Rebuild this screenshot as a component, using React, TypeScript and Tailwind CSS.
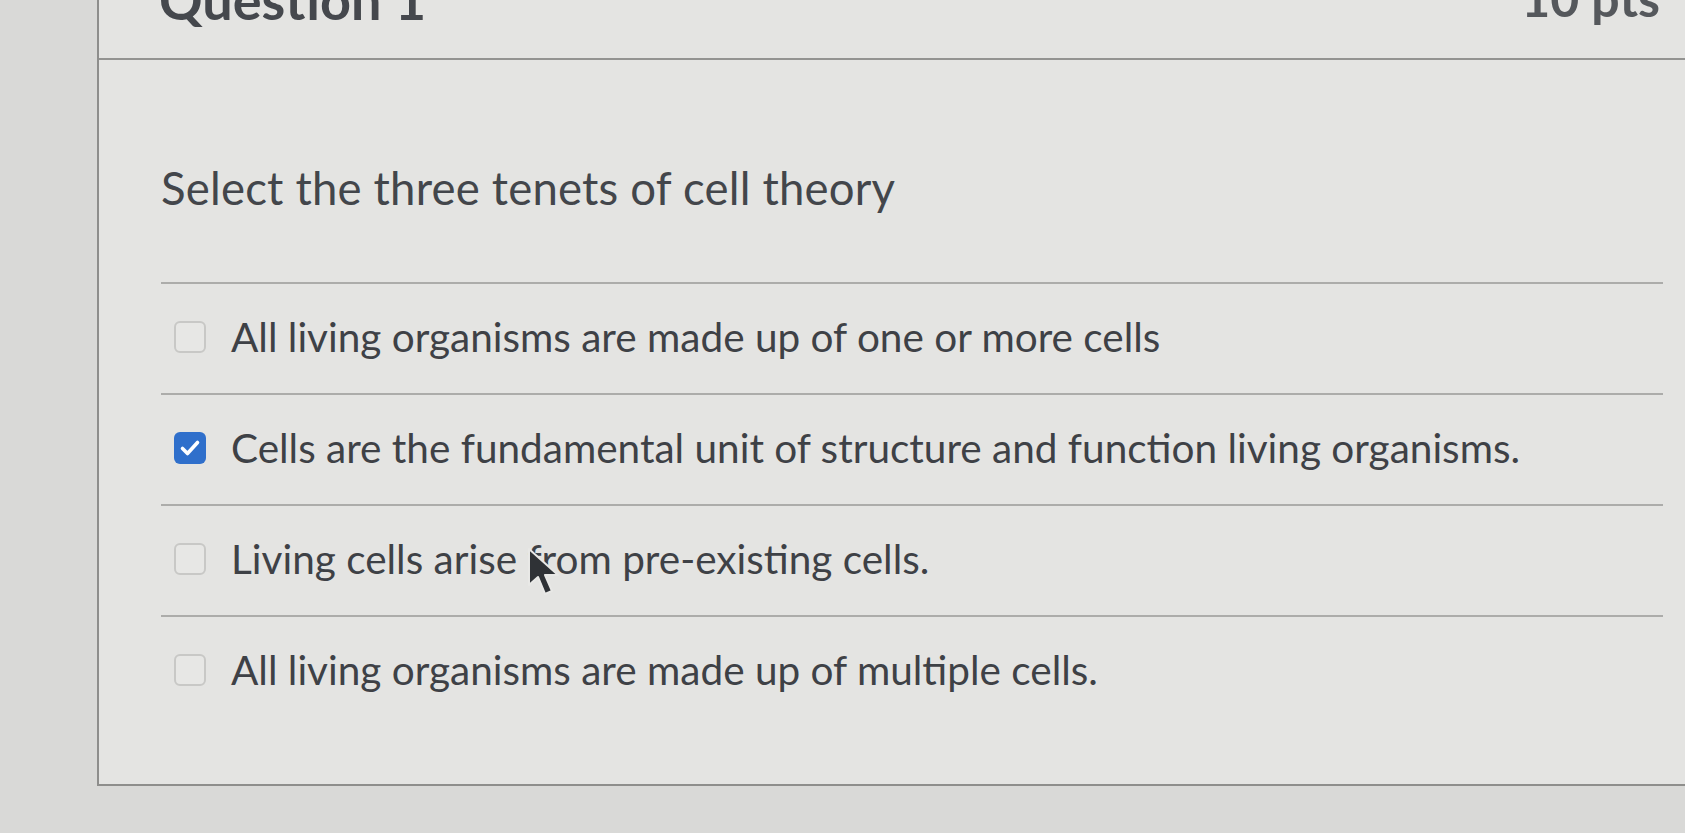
import React from "react";

const options = [
  { text: "All living organisms are made up of one or more cells", checked: false },
  { text: "Cells are the fundamental unit of structure and function living organisms.", checked: true },
  { text: "Living cells arise from pre-existing cells.", checked: false },
  { text: "All living organisms are made up of multiple cells.", checked: false },
];

function Box({ checked }: { checked: boolean }) {
  if (checked) {
    return (
      <div className="w-[32px] h-[32px] rounded-[6px] bg-[#2f6fcb] flex items-center justify-center shrink-0">
        <svg width="24" height="24" viewBox="0 0 24 24" fill="none">
          <path d="M4.5 12.5l5 5L19.5 6.5" stroke="#ffffff" strokeWidth="3.6" strokeLinecap="round" strokeLinejoin="round" />
        </svg>
      </div>
    );
  }
  return <div className="w-[32px] h-[32px] rounded-[6px] border-2 border-[#c8c8c6] bg-[#e7e7e5] shrink-0" />;
}

export default function App() {
  return (
    <div
      className="relative w-[1685px] h-[833px] overflow-hidden bg-[#d9d9d7] flex flex-col"
      style={{ fontFamily: "Lato, 'Open Sans', sans-serif" }}
    >
      <div className="ml-[97px] h-[786px] border-l-2 border-b-2 border-[#8e8e8c] bg-[#e4e4e2] flex flex-col">
        <div className="h-[60px] border-b-2 border-[#939391] flex justify-between items-start overflow-hidden">
          <div className="ml-[60px] mt-[-32px] text-[54px] leading-[64px] font-bold text-[#45484d]">Question 1</div>
          <div className="mr-[25px] mt-[-34px] text-[50px] leading-[64px] font-bold text-[#55585c]">10 pts</div>
        </div>
        <div className="pl-[62px] pr-[22px] flex flex-col">
          <div className="h-[222px] pt-[34px] flex items-center">
            <div className="text-[45.5px] leading-[54px] text-[#43464b] tracking-[0.2px]">Select the three tenets of cell theory</div>
          </div>
          {options.map((o, i) => (
            <div key={i} className="h-[111px] border-t-2 border-[#acacaa] flex items-center pl-[13px] gap-[25px] pb-[3px]">
              <Box checked={o.checked} />
              <div className="text-[40.5px] leading-[50px] text-[#3e4146]">{o.text}</div>
            </div>
          ))}
        </div>
      </div>
      <svg className="absolute left-[527px] top-[547px]" width="36" height="52" viewBox="0 0 36 52">
        <path d="M2 2 L2 38 L11 30 L18 47 L25 44 L18 28 L31 28 Z" fill="#2f3236" stroke="#e8e8e6" strokeWidth="2" strokeLinejoin="round" />
      </svg>
    </div>
  );
}
